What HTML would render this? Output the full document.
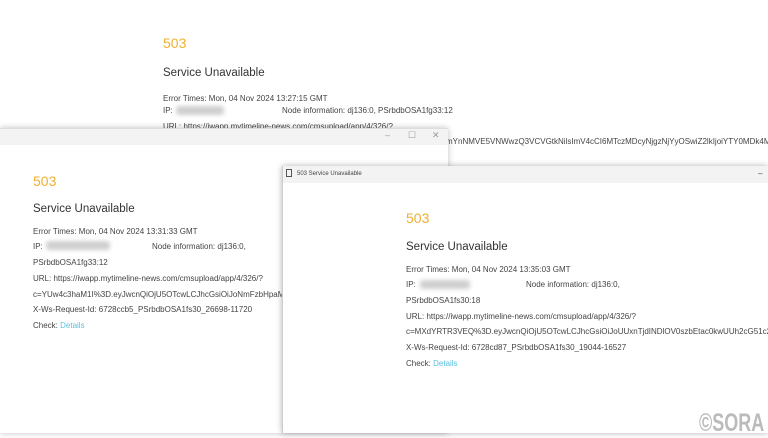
<!DOCTYPE html>
<html><head><meta charset="utf-8"><style>
*{margin:0;padding:0;box-sizing:border-box}
body{width:768px;height:433px;overflow:hidden;background:#fff;position:relative;font-family:"Liberation Sans",Tahoma,sans-serif;color:#333}
.t{position:absolute;white-space:nowrap;font-size:8px;color:#444}
.c{color:#f0b030;font-size:14px}
.h{font-size:11.5px;color:#333}
.blur{position:absolute;background:#cfcfcf;filter:blur(2px);border-radius:3px;height:9px}
.win{position:absolute;background:#fff;overflow:hidden}
.lnk{color:#5bc0de}
</style></head><body>
<div class="t c" style="left:163px;top:35px">503</div>
<div class="t h" style="left:163px;top:67px">Service Unavailable</div>
<div class="t" style="left:163px;top:94px">Error Times: Mon, 04 Nov 2024 13:27:15 GMT</div>
<div class="t" style="left:163px;top:106px">IP:</div><div class="blur" style="left:176px;top:106px;width:48px"></div>
<div class="t" style="left:282px;top:106px">Node information: dj136:0, PSrbdbOSA1fg33:12</div>
<div class="t" style="left:163px;top:122px">URL: https://iwapp.mytimeline-news.com/cmsupload/app/4/326/?</div>
<div class="t" style="left:446px;top:137px">mYnNMVE5VNWwzQ3VCVGtkNilsImV4cCI6MTczMDcyNjgzNjYyOSwiZ2lkIjoiYTY0MDk4MzY</div>

<div class="win" style="left:0;top:128px;width:448px;height:305px;box-shadow:0 0 6px rgba(0,0,0,.25);border-top:1px solid #ddd">
 <div style="height:16px;background:#f3f3f3;position:relative;font-size:9px;color:#999">
  <span style="position:absolute;left:385px;top:1px">–</span><span style="position:absolute;left:408px;top:1px">☐</span><span style="position:absolute;left:432px;top:1px">✕</span>
 </div>
 <div class="t c" style="left:33px;top:44px">503</div>
 <div class="t h" style="left:33px;top:74px">Service Unavailable</div>
 <div class="t" style="left:33px;top:98px">Error Times: Mon, 04 Nov 2024 13:31:33 GMT</div>
 <div class="t" style="left:33px;top:113px">IP:</div><div class="blur" style="left:46px;top:112px;width:64px"></div>
 <div class="t" style="left:152px;top:113px">Node information: dj136:0,</div>
 <div class="t" style="left:33px;top:129px">PSrbdbOSA1fg33:12</div>
 <div class="t" style="left:33px;top:145px">URL: https://iwapp.mytimeline-news.com/cmsupload/app/4/326/?</div>
 <div class="t" style="left:33px;top:161px">c=YUw4c3haM1I%3D.eyJwcnQiOjU5OTcwLCJhcGsiOiJoNmFzbHpaMnM</div>
 <div class="t" style="left:33px;top:176px">X-Ws-Request-Id: 6728ccb5_PSrbdbOSA1fs30_26698-11720</div>
 <div class="t" style="left:33px;top:192px">Check: <span class="lnk">Details</span></div>
</div>

<div class="win" style="left:282px;top:166px;width:486px;height:267px;box-shadow:0 0 6px rgba(0,0,0,.3);border-left:1px solid #ccc">
 <div style="height:17px;background:#f3f3f3;position:relative;font-size:6px;color:#444">
  <span style="position:absolute;left:3px;top:3px;width:6px;height:8px;border:1px solid #555"></span>
  <span style="position:absolute;left:14px;top:5px">503 Service Unavailable</span>
  <span style="position:absolute;left:475px;top:3px;font-size:8px">–</span>
 </div>
 <div class="t c" style="left:123px;top:44px">503</div>
 <div class="t h" style="left:123px;top:75px">Service Unavailable</div>
 <div class="t" style="left:123px;top:99px">Error Times: Mon, 04 Nov 2024 13:35:03 GMT</div>
 <div class="t" style="left:123px;top:114px">IP:</div><div class="blur" style="left:137px;top:114px;width:50px"></div>
 <div class="t" style="left:243px;top:114px">Node information: dj136:0,</div>
 <div class="t" style="left:123px;top:130px">PSrbdbOSA1fs30:18</div>
 <div class="t" style="left:123px;top:146px">URL: https://iwapp.mytimeline-news.com/cmsupload/app/4/326/?</div>
 <div class="t" style="left:123px;top:161px">c=MXdYRTR3VEQ%3D.eyJwcnQiOjU5OTcwLCJhcGsiOiJoUUxnTjdINDlOV0szbEtac0kwUUh2cG51c2VhN</div>
 <div class="t" style="left:123px;top:177px">X-Ws-Request-Id: 6728cd87_PSrbdbOSA1fs30_19044-16527</div>
 <div class="t" style="left:123px;top:193px">Check: <span class="lnk">Details</span></div>
</div>
<div style="position:absolute;left:699px;top:409px;font-size:25px;font-weight:bold;color:#bbb;white-space:nowrap;transform:scaleX(0.72);transform-origin:left top;letter-spacing:0">©SORA</div>
</body></html>
